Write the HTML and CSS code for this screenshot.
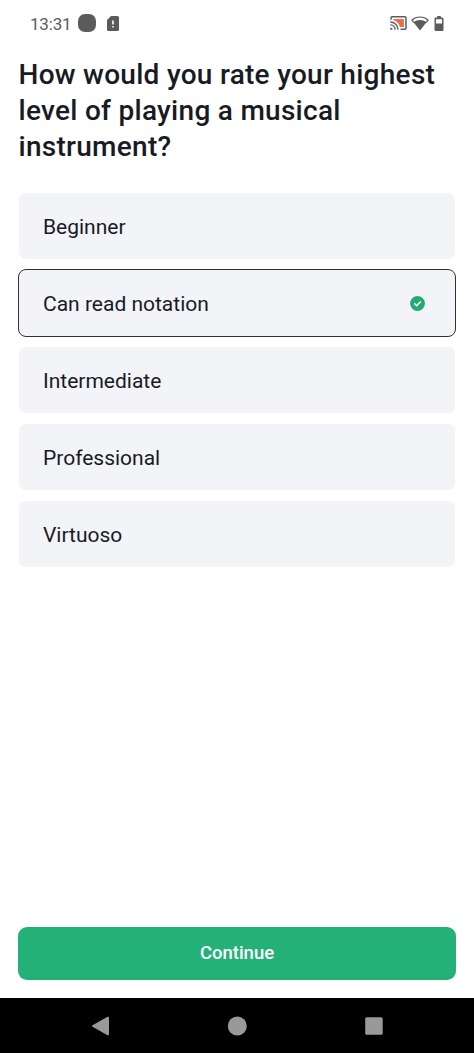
FILE: index.html
```html
<!DOCTYPE html>
<html lang="en">
<head>
<meta charset="utf-8">
<title>Musical level</title>
<link rel="stylesheet" href="styles.css">
</head>
<body>
<div class="screen">
  <header class="status">
    <span class="time">13:31</span>
    <span class="app-dot"></span>
    <svg class="sim" width="12" height="15" viewBox="0 0 12 15"><path fill="#5b5b5b" d="M4 0h6.500a1.500 1.500 0 0 1 1.500 1.500v12a1.500 1.500 0 0 1-1.500 1.500h-9A1.500 1.500 0 0 1 0 13.500V4z"/><path fill="#fff" d="M5.200 4.500h1.600v4H5.200zM5.200 10h1.600v1.600H5.200z"/></svg>
    <span class="spacer"></span>
    <svg class="cast" width="17" height="14" viewBox="0 0 17 14"><path fill="none" stroke="#5b5b66" stroke-width="1.500" d="M1 3.800V2q0-1.200 1.200-1.200h12.600q1.200 0 1.200 1.200v10q0 1.200-1.200 1.200H10.500"/><path fill="#ea6f43" d="M3.400 3h10.500v8H10C9 7.500 6.500 5 3.400 4.300z"/><path fill="none" stroke="#5b5b66" stroke-width="1.400" d="M.3 6A7.700 7.700 0 0 1 8 13.700M.3 8.900a4.800 4.800 0 0 1 4.800 4.800"/><path fill="#5b5b66" d="M.3 11.400A2.300 2.300 0 0 1 2.600 13.700H.3z"/></svg>
    <svg class="wifi" width="18" height="15" viewBox="0 0 18 15"><path fill="#5b5b5b" d="M2.500 6.300C6 3.300 12 3.300 15.500 6.300L9 14.500z"/><path fill="none" stroke="#5b5b5b" stroke-width="1.200" d="M2.900 6.700L1 4C5.500 0 12.500 0 17 4l-1.900 2.700"/></svg>
    <svg class="battery" width="10" height="15" viewBox="0 0 10 15"><path fill="#5b5b5b" d="M3.200 0h3.600v1.500H8.300q1.200 0 1.200 1.300v10.900q0 1.300-1.200 1.300h-6.600q-1.200 0-1.200-1.300V2.800q0-1.300 1.200-1.300h1.500z"/><path fill="#fff" d="M2 3.200h6v4.300H2z"/></svg>
  </header>
  <main class="content">
    <h1 class="title">How would you rate your highest<br>level of playing a musical<br>instrument?</h1>
    <div class="options">
      <div class="option">Beginner</div>
      <div class="option selected">Can read notation
        <svg class="check" width="15" height="15" viewBox="0 0 15 15"><circle cx="7.500" cy="7.500" r="7.400" fill="#24aa73"/><path fill="none" stroke="#fff" stroke-width="1.600" d="M4.300 7.400l2.300 2.300 4.200-4.200"/></svg>
      </div>
      <div class="option">Intermediate</div>
      <div class="option">Professional</div>
      <div class="option">Virtuoso</div>
    </div>
    <button class="continue">Continue</button>
  </main>
  <nav class="navbar">
    <svg width="18" height="20" viewBox="0 0 18 20"><path fill="#999" stroke="#999" stroke-width="2" stroke-linejoin="round" d="M17 1.700v16.600L2 10z"/></svg>
    <svg width="20" height="20" viewBox="0 0 20 20"><circle cx="10.300" cy="10" r="9.500" fill="#999"/></svg>
    <svg width="18" height="18" viewBox="0 0 18 18"><rect x=".2" y=".2" width="17.500" height="17.500" rx="1.500" fill="#999"/></svg>
  </nav>
</div>
</body>
</html>
```
FILE: styles.css
```css
* { box-sizing: border-box; }
body { margin: 0; background: #fff; font-family: Roboto, sans-serif; color: #181b25; }
.screen { width: 474px; height: 1053px; display: flex; flex-direction: column; }
.status { height: 46px; padding: 0 30px; display: flex; align-items: center; color: #5b5b5b; }
.time { font-size: 17px; width: 48px; letter-spacing: -.2px; padding-top: 1px; }
.app-dot { width: 18px; height: 18px; border-radius: 7px; background: #5b5b5b; }
.sim { margin-left: 11px; }
.spacer { flex: 1; }
.wifi { margin: 0 5px 0 4px; }
.content { flex: 1; display: flex; flex-direction: column; padding: 11px 18px 18px; }
.title { margin: 0 0 0 .5px; font-size: 28px; line-height: 36px; font-weight: 500; letter-spacing: .28px; white-space: nowrap; }
.options { margin-top: 27px; display: flex; flex-direction: column; gap: 9px; }
.option { height: 68px; border: 1px solid #fff; border-radius: 8px; background: #f3f4f7; padding: 1px 30px 0 24px; display: flex; align-items: center; justify-content: space-between; font-size: 21px; }
.option.selected { border-color: #303238; }
.check { margin-bottom: 1px; }
.continue { margin-top: auto; height: 53px; border: 0; border-radius: 9px; background: #24b177; color: #fff; font: 500 18.500px Roboto, sans-serif; }
.navbar { height: 55.500px; background: #000; display: flex; justify-content: space-between; align-items: center; padding: 1px 91px 0; }
```
